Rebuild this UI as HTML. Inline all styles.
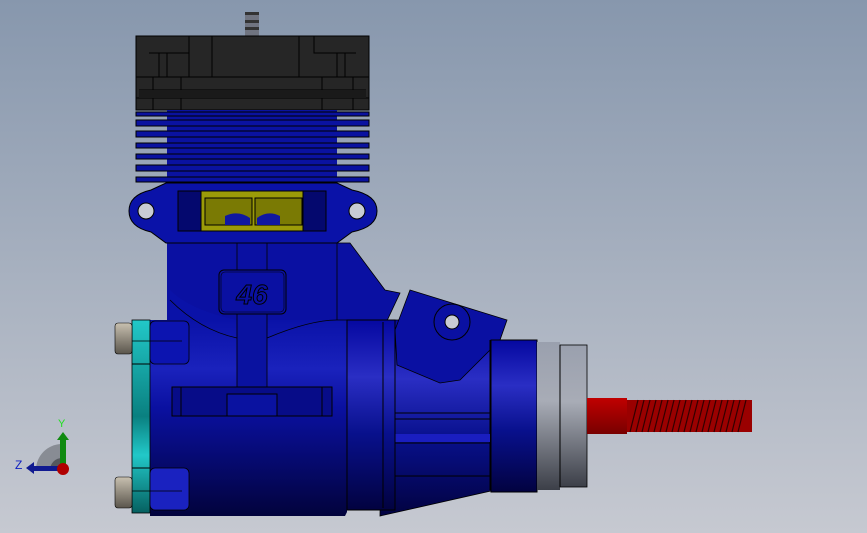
<!DOCTYPE html>
<html><head><meta charset="utf-8"><style>html,body{margin:0;padding:0;width:867px;height:533px;overflow:hidden}</style></head>
<body>
<svg width="867" height="533" viewBox="0 0 867 533" xmlns="http://www.w3.org/2000/svg" font-family="Liberation Sans, sans-serif">
<defs>
<linearGradient id="bg" x1="0" y1="0" x2="0" y2="1"><stop offset="0" stop-color="#8797ad"/><stop offset="1" stop-color="#c6c9d1"/></linearGradient>
<linearGradient id="bl" x1="0" y1="0" x2="0" y2="1"><stop offset="0" stop-color="#0a12a8"/><stop offset="0.25" stop-color="#1a22bc"/><stop offset="0.45" stop-color="#0a10a0"/><stop offset="1" stop-color="#02033c"/></linearGradient>
<linearGradient id="bl2" x1="0" y1="0" x2="0" y2="1"><stop offset="0" stop-color="#0508a0"/><stop offset="0.3" stop-color="#2a2ec4"/><stop offset="0.6" stop-color="#08108c"/><stop offset="1" stop-color="#020240"/></linearGradient>
<linearGradient id="gr" x1="0" y1="0" x2="0" y2="1"><stop offset="0" stop-color="#9aa0ae"/><stop offset="0.4" stop-color="#a8acb6"/><stop offset="1" stop-color="#3c3f48"/></linearGradient>
<linearGradient id="cy" x1="0" y1="0" x2="0" y2="1"><stop offset="0" stop-color="#22c8c8"/><stop offset="0.5" stop-color="#0a8080"/><stop offset="0.7" stop-color="#22c8c8"/><stop offset="1" stop-color="#066060"/></linearGradient>
<linearGradient id="bt" x1="0" y1="0" x2="0" y2="1"><stop offset="0" stop-color="#c8c0b0"/><stop offset="1" stop-color="#5a554c"/></linearGradient>
<linearGradient id="rd" x1="0" y1="0" x2="0" y2="1"><stop offset="0" stop-color="#c00000"/><stop offset="1" stop-color="#780000"/></linearGradient>
</defs>
<rect width="867" height="533" fill="url(#bg)"/>
<rect x="245" y="12" width="14" height="24" fill="#707480"/>
<rect x="245" y="12" width="14" height="3" fill="#333"/><rect x="245" y="20" width="14" height="3" fill="#333"/><rect x="245" y="27" width="14" height="3" fill="#333"/>
<rect x="136" y="36" width="233" height="74" fill="#262626" stroke="#000"/>
<path d="M136 77H369M139 90H366M136 98H369M153 77V110M181 77V110M322 77V110M353 77V110M189 36V53M149 53H189V77M212 36V77M299 36V77M314 36V53H356M159 53V77M167 53V77M345 53V77M337 53V77" stroke="#000" fill="none"/>
<rect x="139" y="90" width="227" height="8" fill="#1a1a1a"/>
<rect x="167" y="110" width="170" height="73" fill="#0a12a0"/>
<g fill="#0a12a0" stroke="#000" stroke-width="1">
<rect x="136" y="112" width="233" height="4"/><rect x="136" y="120" width="233" height="6"/><rect x="136" y="131" width="233" height="6"/><rect x="136" y="143" width="233" height="5"/><rect x="136" y="154" width="233" height="5"/><rect x="136" y="165" width="233" height="6"/><rect x="136" y="177" width="233" height="5"/>
</g>
<path d="M167 243H337V320H167Z" fill="#0a10a2"/>
<path d="M337 243L350 243L385 290L400 293L385 325L337 325Z" fill="#0a10a2" stroke="#000" stroke-width="0.8"/>
<path d="M166 183H337L352 190Q377 195 377 211Q377 227 352 232L337 243H166L151 232Q129 227 129 211Q129 195 151 190Z" fill="#0a12a8" stroke="#000"/>
<circle cx="146" cy="211" r="8" fill="#c8ccd4" stroke="#000"/><circle cx="357" cy="211" r="8" fill="#c8ccd4" stroke="#000"/>
<rect x="178" y="191" width="148" height="40" fill="#04086e" stroke="#000"/>
<rect x="201" y="191" width="102" height="40" fill="#9b9b08" stroke="#000"/>
<rect x="205" y="198" width="47" height="27" fill="#7a7a04" stroke="#000"/><rect x="255" y="198" width="47" height="27" fill="#7a7a04" stroke="#000"/>
<path d="M225 216Q238 210 250 218V225H225Z M257 218Q268 210 280 216V225H257Z" fill="#1018a0"/>
<path d="M383 320H495V490L380 516Z" fill="url(#bl2)" stroke="#000" stroke-width="0.8"/>
<path d="M410 290L507 320L500 340L460 380L440 383L397 365L395 330Z" fill="#0a10a2" stroke="#000" stroke-width="0.8"/>
<circle cx="452" cy="322" r="18" fill="none" stroke="#000"/><circle cx="452" cy="322" r="7" fill="#c8ccd4" stroke="#000"/>
<path d="M395 413H490M395 419H490M395 435H490M395 443H490M395 476H490M395 365V476M490 340V490" stroke="#000" fill="none"/>
<rect x="395" y="434" width="95" height="8" fill="#1a1ec0"/>
<path d="M150 320H237Q190 310 170 290V320Z" fill="#0a12a8"/>
<path d="M150 320H347V512L345 516H150Z" fill="url(#bl)"/>
<path d="M170 300Q200 330 237 338M267 338Q310 320 337 320H347" fill="none" stroke="#000" stroke-width="0.8"/>
<path d="M237 243V270M267 243V270" stroke="#000" stroke-width="0.8"/>
<rect x="237" y="314" width="30" height="74" fill="#0a12a0" stroke="#000" stroke-width="0.8"/>
<rect x="219" y="270" width="67" height="44" rx="5" fill="#0a10a2" stroke="#000"/>
<rect x="221" y="272" width="63" height="40" rx="4" fill="none" stroke="#000" stroke-width="0.6"/>
<text x="252" y="304" font-size="28" font-style="italic" font-weight="bold" text-anchor="middle" fill="#0a10a2" stroke="#000" stroke-width="1">46</text>
<rect x="172" y="387" width="160" height="29" fill="#070c88" stroke="#000"/>
<rect x="227" y="394" width="50" height="22" fill="#0a12a0" stroke="#000"/>
<path d="M181 387V416M322 387V416" stroke="#000"/>
<rect x="347" y="320" width="48" height="190" fill="url(#bl2)" stroke="#000"/>
<path d="M383 322V508" stroke="#000"/>
<rect x="132" y="320" width="18" height="193" fill="url(#cy)" stroke="#000" stroke-width="0.8"/>
<path d="M132 364H150M132 468H150" stroke="#000"/>
<rect x="150" y="321" width="39" height="43" rx="5" fill="#0c14b0" stroke="#000" stroke-width="0.8"/>
<rect x="150" y="468" width="39" height="42" rx="5" fill="#1a22c0" stroke="#000" stroke-width="0.8"/>
<path d="M132 341H182M132 491H182" stroke="#000" stroke-width="0.8"/>
<rect x="115" y="323" width="17" height="31" rx="3" fill="url(#bt)" stroke="#000" stroke-width="0.6"/>
<rect x="115" y="477" width="17" height="31" rx="3" fill="url(#bt)" stroke="#000" stroke-width="0.6"/>
<rect x="491" y="340" width="46" height="152" fill="url(#bl2)" stroke="#000"/>
<rect x="537" y="342" width="23" height="148" fill="url(#gr)"/>
<rect x="560" y="345" width="27" height="142" fill="url(#gr)" stroke="#000" stroke-width="0.8"/>
<path d="M560 345V487" stroke="#000"/>
<rect x="587" y="398" width="40" height="36" fill="url(#rd)"/>
<rect x="627" y="400" width="125" height="32" fill="#9a0000"/>
<g stroke="#300" stroke-width="1.2">
<path d="M630 432L638 400M636 432L644 400M642 432L650 400M648 432L656 400M654 432L662 400M660 432L668 400M666 432L674 400M672 432L680 400M678 432L686 400M684 432L692 400M690 432L698 400M696 432L704 400M702 432L710 400M708 432L716 400M714 432L722 400M720 432L728 400M726 432L734 400M732 432L740 400M738 432L746 400"/>
</g>
<path d="M36 470A26 26 0 0 1 62 444V470Z" fill="#888c94"/>
<path d="M50 470A12 12 0 0 1 62 458V470Z" fill="#55585e"/>
<rect x="60" y="438" width="6" height="30" fill="#108a10"/><path d="M57 440L63 432L69 440Z" fill="#108a10"/>
<rect x="32" y="466" width="30" height="5" fill="#101a90"/><path d="M34 462L26 468L34 474Z" fill="#101a90"/>
<circle cx="63" cy="469" r="6" fill="#b00000"/>
<text x="58" y="427" font-size="11" fill="#20e020">Y</text>
<text x="15" y="469" font-size="12" fill="#1020c0">Z</text>
</svg>
</body></html>
